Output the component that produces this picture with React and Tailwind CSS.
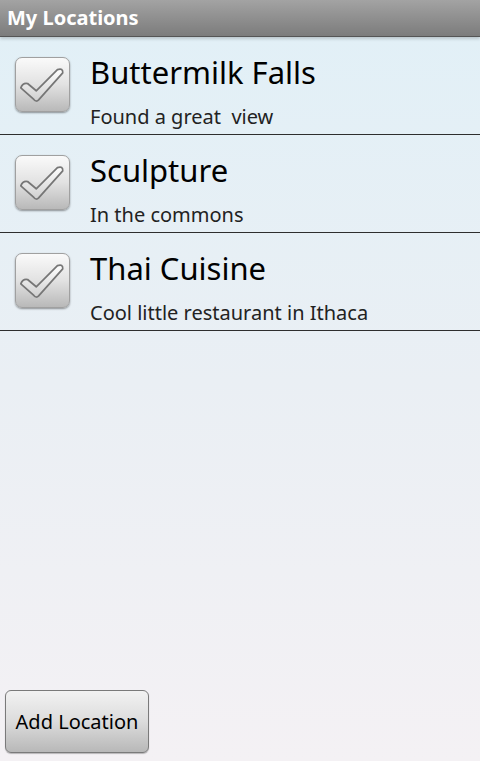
import React from "react";

const items = [
  { title: "Buttermilk Falls", sub: "Found a great  view" },
  { title: "Sculpture", sub: "In the commons" },
  { title: "Thai Cuisine", sub: "Cool little restaurant in Ithaca" },
];

function Check() {
  return (
    <div className="w-[55px] h-[55px] rounded-[7px] border border-[#a0a0a0] bg-gradient-to-b from-[#fafafa] via-[#e2e2e2] to-[#b9b9b9] shadow-[0_1px_2px_rgba(0,0,0,0.4)] flex items-center justify-center shrink-0">
      <svg width="55" height="55" viewBox="0 0 55 55">
        <defs>
          <linearGradient id="ck" x1="0" y1="0" x2="0" y2="1">
            <stop offset="0" stopColor="#ffffff" />
            <stop offset="1" stopColor="#d0d0d0" />
          </linearGradient>
        </defs>
        <path
          d="M5 31 Q7 25.5 12 26.5 L21 34 L43 12 Q49 10 48.5 15.5 L23.5 43.5 Q21 46 18.5 43 Z"
          fill="url(#ck)"
          stroke="#767676"
          strokeWidth="1.8"
          strokeLinejoin="round"
        />
      </svg>
    </div>
  );
}

export default function App() {
  return (
    <div
      className="w-[480px] h-[761px] flex flex-col overflow-hidden bg-gradient-to-b from-[#e1f0f7] via-[#eaeff4] to-[#f4f1f4]"
      style={{ fontFamily: '"Noto Sans", "Open Sans", sans-serif' }}
    >
      <div className="h-[37px] shrink-0 flex items-center px-[7px] bg-gradient-to-b from-[#a3a3a3] to-[#7c7c7c] border-b border-[#555] shadow-[0_2px_3px_rgba(0,0,0,0.18)]">
        <span className="text-white font-bold text-[20px] leading-none">My Locations</span>
      </div>
      <div className="flex flex-col">
        {items.map((it) => (
          <div key={it.title} className="h-[98px] flex items-start border-b border-[#2e2e2e] pl-[15px]">
            <div className="mt-[20px]">
              <Check />
            </div>
            <div className="flex flex-col ml-[20px] mt-[15px]">
              <span className="text-[31px] leading-[40px] text-black">{it.title}</span>
              <span className="text-[20px] leading-[28px] mt-[11px] text-[#222] whitespace-pre">{it.sub}</span>
            </div>
          </div>
        ))}
      </div>
      <div className="flex-1" />
      <div className="px-[5px] pb-[8px]">
        <button className="w-[144px] h-[63px] rounded-[6px] border border-[#7a7a7a] bg-gradient-to-b from-[#f2f2f2] via-[#dcdcdc] to-[#b8b8b8] text-[20px] text-black shadow-[0_1px_1px_rgba(0,0,0,0.25)]">
          Add Location
        </button>
      </div>
    </div>
  );
}
